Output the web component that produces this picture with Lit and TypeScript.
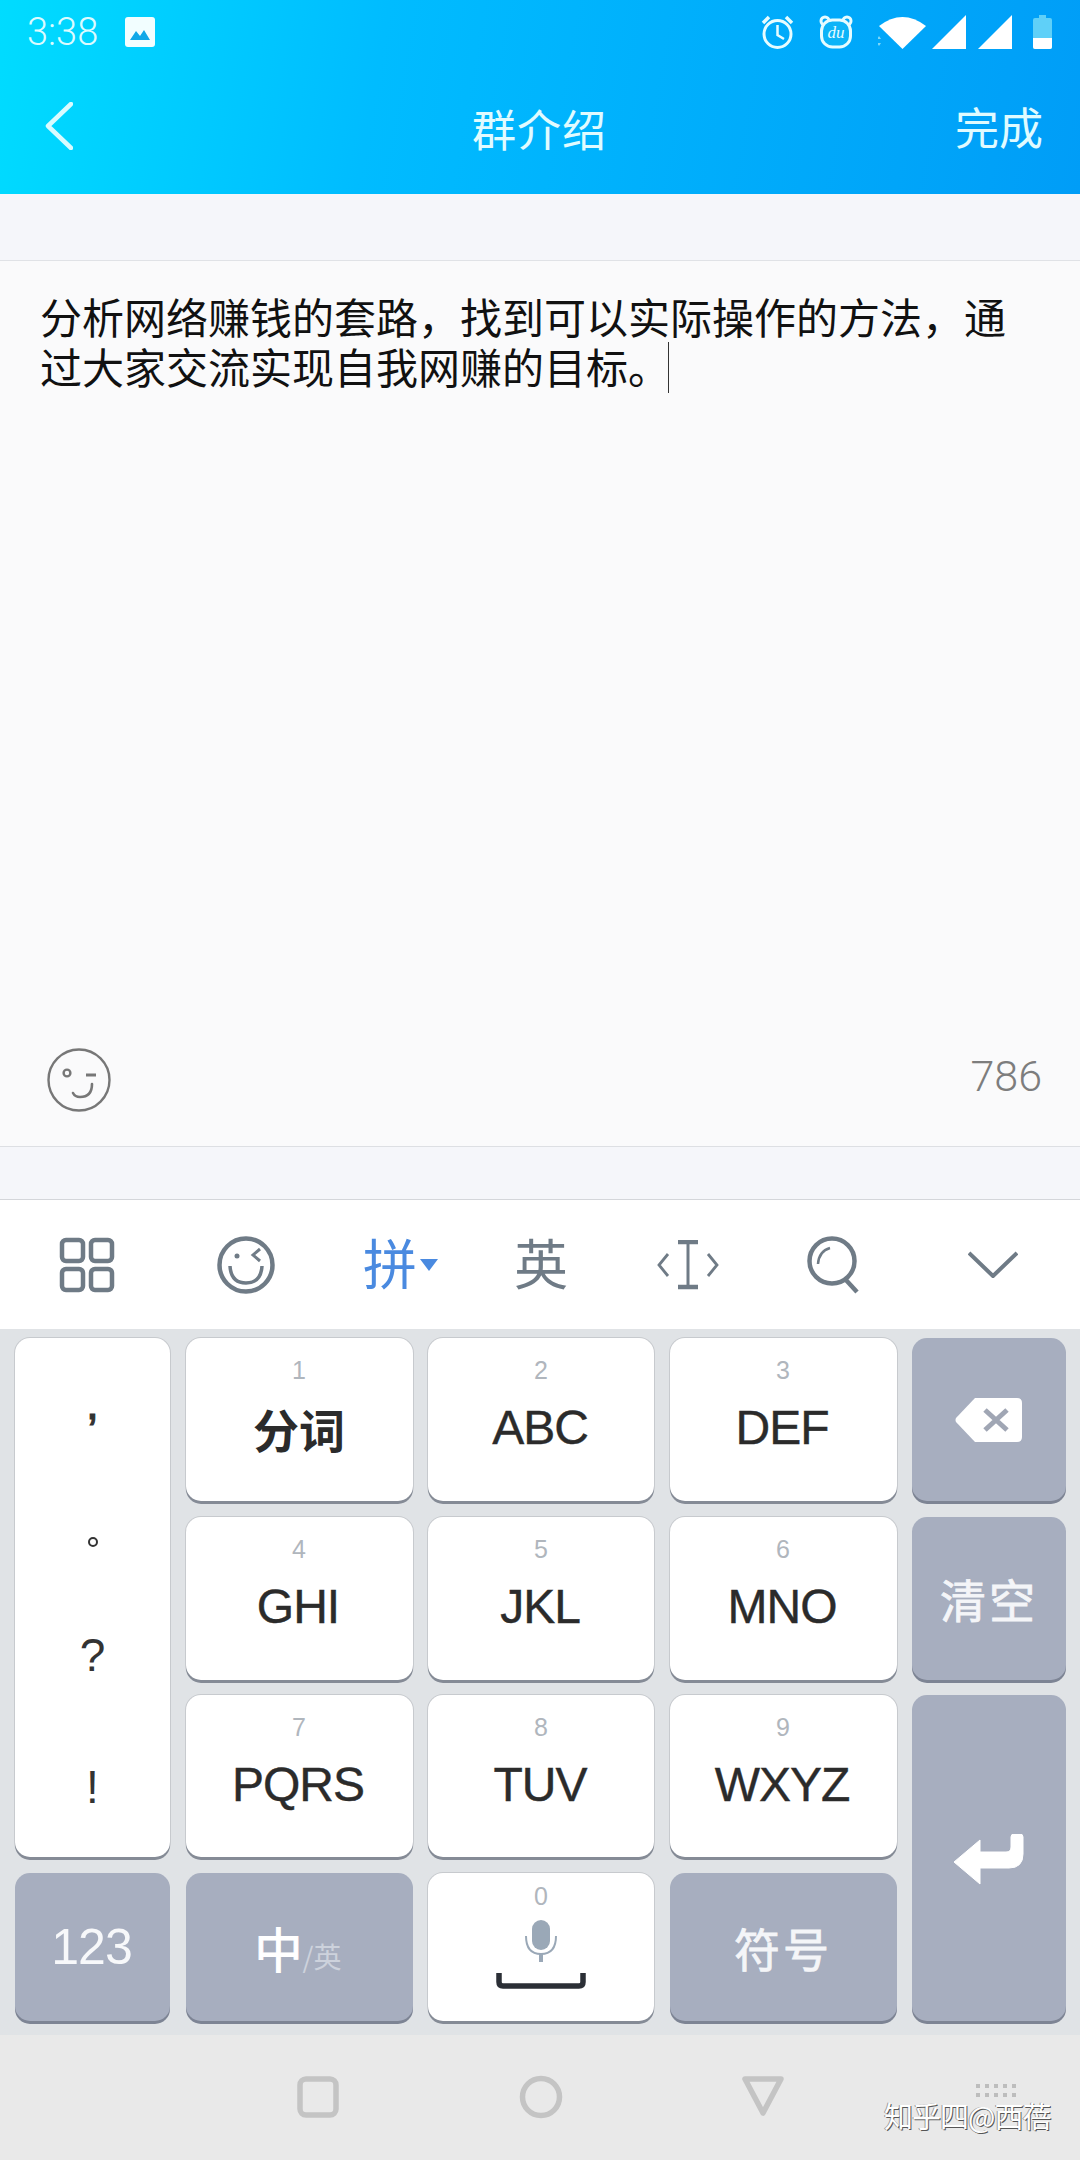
import { LitElement, html, css } from "lit";
import { customElement } from "lit/decorators.js";

@customElement("app-root")
export class AppRoot extends LitElement {
  static styles = css`
    :host { display: block; width: 1080px; height: 2160px; font-family: "Noto Sans CJK SC", "Noto Sans", sans-serif; background: #fafafb; position: relative; overflow: hidden; }
    .page { display: flex; flex-direction: column; height: 2160px; }
    .top { height: 194px; background: linear-gradient(100deg, #00dcff 0%, #00bcff 35%, #009df7 100%); color: #dcfbff; display: flex; flex-direction: column; }
    .status { height: 64px; display: flex; align-items: center; padding: 0 28px 0 27px; flex: none; }
    .time { font: 300 38px Roboto, sans-serif; width: 98px; }
    .status .spacer { flex: 1; }
    .status svg { display: block; flex: none; }
    .st-alarm { margin-right: 25px; margin-left: 2px; }
    .st-du { margin-right: 25px; }
    .st-wifi { margin-right: 5px; }
    .st-sig1 { margin-right: 12px; }
    .st-sig2 { margin-right: 21px; }
    .nav { flex: 1; display: grid; grid-template-columns: 1fr auto 1fr; align-items: center; padding: 0 37px 6px 45px; }
    .nav svg { display: block; }
    .title { font-size: 44px; line-height: 60px; letter-spacing: 1px; color: #e0fbff; margin-top: 3px; margin-left: -9px; }
    .done { font-size: 44px; line-height: 60px; justify-self: end; color: #e0fbff; }
    .gap1 { height: 66px; background: #f5f6fa; flex: none; }
    .editor { height: 887px; flex: none; box-sizing: border-box; border-top: 1px solid #e0e2e6; border-bottom: 1px solid #dddfe3; background: #fafafb; display: flex; flex-direction: column; }
    .text { padding: 30px 74px 0 40px; font-size: 42px; line-height: 50px; color: #111; }
    .caret { display: inline-block; width: 1px; height: 51px; background: #333; margin: -5px 0 -5px -2px; vertical-align: -4px; }
    .foot { margin-top: auto; padding: 0 38px 34px 47px; display: flex; align-items: center; justify-content: space-between; }
    .count { font: 300 43px Roboto, sans-serif; color: #7d7d7d; margin-top: -8px; }
    .gap2 { height: 52px; background: #f5f6fa; flex: none; }
    .tools { height: 130px; box-sizing: border-box; flex: none; background: #fff; border-top: 1px solid #d4d6da; display: grid; grid-template-columns: 174px 144px 150px 146px 148px 144px 174px; align-items: center; justify-items: center; color: #6f7b86; }
    .tools svg { display: block; }
    .tool-txt { font-size: 54px; line-height: 60px; margin-top: -5px; }
    .pin { color: #4a8ae0; display: flex; align-items: center; margin-left: 15px; }
    .pin svg { margin-left: 3px; margin-top: 0; }
    .kb { height: 706px; flex: none; box-sizing: border-box; background: #e0e3e6; padding: 9px 14px 14.5px 15px; display: grid; grid-template-columns: 155px 227px 226px 227px 154px; grid-template-rows: 163px 163px 162px 148px; column-gap: 15.5px; row-gap: 15.5px; }
    .key { position: relative; border-radius: 15px; background: #fff; box-shadow: 0 3px 0 #858b96, 0 0 0 1px #c7cace; display: flex; flex-direction: column; align-items: center; color: #2b2b2b; }
    .key .num { font: 25px "Liberation Sans", sans-serif; color: #b0b6bd; line-height: 30px; margin-top: 17px; }
    .key .lab { font: 48px "Liberation Sans", "Noto Sans CJK SC", sans-serif; line-height: 60px; margin-top: 13px; letter-spacing: -1px; margin-left: -2px; -webkit-text-stroke: 0.4px #2b2b2b; }
    .key .zh { font: 700 46px "Noto Sans CJK SC", sans-serif; line-height: 60px; margin-top: 13px; }
    .dark { background: #a7aebf; box-shadow: 0 3px 0 #7d8494; color: #fff; justify-content: center; }
    .dark .big { font: 46px "Noto Sans CJK SC", sans-serif; line-height: 60px; letter-spacing: 3px; color: #f4f5f8; -webkit-text-stroke: 0.8px #f4f5f8; }
    .n123 { font: 50px "Liberation Sans", sans-serif; color: #f7f8fa; letter-spacing: -1px; margin-left: -2px; }
    .zhong { display: flex; align-items: baseline; }
    .zhong b { font: 48px "Noto Sans CJK SC", sans-serif; color: #fff; -webkit-text-stroke: 1px #fff; margin-left: -2px; }
    .zhong i { font: 28px "Noto Sans CJK SC", sans-serif; color: #cdd2dc; }
    .punct { grid-row: 1 / 4; justify-content: flex-start; color: #333; }
    .p { flex: none; display: flex; align-items: center; justify-content: center; font: 46px "Liberation Sans", sans-serif; line-height: 60px; }
    .p1 { margin-top: 5px; height: 120px; -webkit-text-stroke: 1.2px #333; }
    .p2 { height: 158px; }
    .ring { width: 10px; height: 10px; border: 2px solid #333; border-radius: 50%; box-sizing: border-box; }
    .p3 { height: 68px; }
    .p4 { height: 172px; padding-top: 24px; box-sizing: border-box; }
    .del { grid-column: 5; grid-row: 1; }
    .clear { grid-column: 5; grid-row: 2; }
    .enter { grid-column: 5; grid-row: 3 / 5; }
    .enter svg { margin-top: 4px; }
    .voice .num { margin-top: 8px; }
    .voice svg { display: block; margin-top: 9px; }
    .navbar { flex: 1; background: #e9e9e9; display: grid; grid-template-columns: 297px 42px 181px 42px 180px 42px 1fr; padding-top: 41px; box-sizing: border-box; align-items: start; }
    .navbar svg { display: block; overflow: visible; }
    .mark { position: absolute; left: 884px; top: 2098px; font-size: 29px; line-height: 34px; letter-spacing: -1px; color: #fff; text-shadow: 1px 1px 0 #555, -1px 0 0 #999; white-space: nowrap; }
    .dots { position: absolute; left: 976px; top: 2084px; }
  `;

  private digitKey(num: string, label: string, zh = false) {
    return html`<div class="key"><span class="num">${num}</span><span class=${zh ? "zh" : "lab"}>${label}</span></div>`;
  }

  render() {
    return html`
      <div class="page">
        <div class="top">
          <div class="status">
            <span class="time">3:38</span>
            <svg width="30" height="30" viewBox="0 0 30 30"><rect x="0" y="0" width="30" height="30" rx="3" fill="#f2feff"/><path d="M5 23 L11 14 L15 19 L19 13 L25 23 Z" fill="#11a8e8"/></svg>
            <span class="spacer"></span>
            <svg class="st-alarm" width="33" height="35" viewBox="0 0 33 35" fill="none" stroke="#e6fcff" stroke-width="3"><circle cx="16.5" cy="19" r="13.5"/><path d="M16.5 10 V20 L23 24" stroke-width="2.5"/><path d="M2 8 L8 2 M31 8 L25 2" stroke-width="3.5"/></svg>
            <svg class="st-du" width="34" height="34" viewBox="0 0 34 34" fill="none" stroke="#e6fcff" stroke-width="3"><circle cx="6" cy="6" r="4"/><circle cx="28" cy="6" r="4"/><rect x="2.5" y="5" width="29" height="27" rx="11" fill="#0cb4f8"/><text x="17" y="23" font-family="Liberation Serif, serif" font-style="italic" font-size="17" fill="#e6fcff" stroke="none" text-anchor="middle">du</text></svg>
            <svg class="st-wifi" width="49" height="34" viewBox="0 0 49 34"><path d="M24.5 33 L1 10 Q24.5 -8 48 10 Z" fill="#fff" transform="translate(0 1)"/><path d="M2 24 L4 21 L6 24 Z M2 28 L4 31 L6 28 Z" fill="#7fd8f8" transform="translate(-3 0)"/></svg>
            <svg class="st-sig1" width="34" height="34" viewBox="0 0 34 34"><path d="M34 0 V34 H0 Z" fill="#fff"/></svg>
            <svg class="st-sig2" width="34" height="34" viewBox="0 0 34 34"><path d="M34 0 V34 H0 Z" fill="#fff"/></svg>
            <svg width="19" height="34" viewBox="0 0 19 34"><path d="M6 0 H13 V3 H17 Q19 3 19 5 V32 Q19 34 17 34 H2 Q0 34 0 32 V5 Q0 3 2 3 H6 Z" fill="#5fd0f8"/><path d="M0 23 H19 V32 Q19 34 17 34 H2 Q0 34 0 32 Z" fill="#fff"/></svg>
          </div>
          <div class="nav">
            <svg width="28" height="48" viewBox="0 0 28 48" fill="none" stroke="#d9fbff" stroke-width="4.5" stroke-linecap="round" stroke-linejoin="round"><path d="M26 2 L3 24 L26 46"/></svg>
            <span class="title">群介绍</span>
            <span class="done">完成</span>
          </div>
        </div>
        <div class="gap1"></div>
        <div class="editor">
          <div class="text">分析网络赚钱的套路，找到可以实际操作的方法，通过大家交流实现自我网赚的目标。<span class="caret"></span></div>
          <div class="foot">
            <svg width="64" height="64" viewBox="0 0 64 64" fill="none" stroke="#777" stroke-width="2.4"><circle cx="32" cy="32" r="30.5"/><circle cx="20" cy="25" r="3.4"/><path d="M39 27 H49" stroke-width="3"/><path d="M45 36 Q45 49 33 49 Q28 49 26 45" stroke-linecap="round" stroke-width="2.6"/></svg>
            <span class="count">786</span>
          </div>
        </div>
        <div class="gap2"></div>
        <div class="tools">
          <svg width="56" height="56" viewBox="0 0 56 56" fill="none" stroke="#6f7b86" stroke-width="4.5"><rect x="3" y="3" width="21" height="21" rx="4"/><rect x="32" y="3" width="21" height="21" rx="4"/><rect x="3" y="32" width="21" height="21" rx="4"/><rect x="32" y="32" width="21" height="21" rx="4"/></svg>
          <svg width="58" height="58" viewBox="0 0 58 58" fill="none" stroke="#6f7b86" stroke-width="4.5"><circle cx="29" cy="29" r="26.5"/><path d="M13 30 Q14 47 29 47 Q44 47 45 30" stroke-width="3.5"/><circle cx="20" cy="20" r="2.5" fill="#6f7b86" stroke="none"/><path d="M43 13 L36 19 L43 25" stroke-width="3"/></svg>
          <div class="pin"><span class="tool-txt">拼</span><svg width="18" height="12" viewBox="0 0 18 12"><path d="M0 0 H18 L9 12 Z" fill="#4a8ae0"/></svg></div>
          <span class="tool-txt">英</span>
          <svg width="62" height="50" viewBox="0 0 62 50" fill="none" stroke="#6f7b86"><path d="M21 2 H41 M21 47 H41" stroke-width="4.5"/><path d="M31 2 V47" stroke-width="3"/><path d="M11 14 L2 25 L11 36 M51 14 L60 25 L51 36" stroke-width="2.8"/></svg>
          <svg width="54" height="58" viewBox="0 0 54 58" fill="none" stroke="#6f7b86"><circle cx="25" cy="25" r="22.5" stroke-width="4.5"/><path d="M23 12 Q12 15 11 28" stroke-width="2.5"/><path d="M39 44 L50 56" stroke-width="4.5"/></svg>
          <svg width="50" height="28" viewBox="0 0 50 28" fill="none" stroke="#6f7b86" stroke-width="4" stroke-linejoin="round"><path d="M1 2 L25 25 L49 2"/></svg>
        </div>
        <div class="kb">
          <div class="key punct">
            <div class="p p1">,</div>
            <div class="p p2"><span class="ring"></span></div>
            <div class="p p3">?</div>
            <div class="p p4">!</div>
          </div>
          ${this.digitKey("1", "分词", true)}
          ${this.digitKey("2", "ABC")}
          ${this.digitKey("3", "DEF")}
          <div class="key dark del">
            <svg width="68" height="46" viewBox="0 0 68 46"><path d="M20 1 H62 Q67 1 67 6 V40 Q67 45 62 45 H20 L1 25 Q0 23 1 21 Z" fill="#fff"/><path d="M30 13 L52 33 M52 13 L30 33" stroke="#a0a6b4" stroke-width="5"/></svg>
          </div>
          ${this.digitKey("4", "GHI")}
          ${this.digitKey("5", "JKL")}
          ${this.digitKey("6", "MNO")}
          <div class="key dark clear"><span class="big">清空</span></div>
          ${this.digitKey("7", "PQRS")}
          ${this.digitKey("8", "TUV")}
          ${this.digitKey("9", "WXYZ")}
          <div class="key dark enter">
            <svg width="70" height="52" viewBox="0 0 70 52"><path d="M0 28 L26 6 V18 H52 Q57 18 57 13 V3 Q57 0 60 0 H66 Q69 0 69 3 V20 Q69 34 55 34 H26 V50 Z" fill="#fff" stroke="#fff" stroke-width="1" stroke-linejoin="round"/></svg>
          </div>
          <div class="key dark"><span class="n123">123</span></div>
          <div class="key dark"><div class="zhong"><b>中</b><i>/英</i></div></div>
          <div class="key voice">
            <span class="num">0</span>
            <svg width="94" height="70" viewBox="0 0 94 70" fill="none"><rect x="38" y="0" width="18" height="30" rx="9" fill="#9aa8b7"/><path d="M32 16 Q32 34 47 34 Q62 34 62 16" stroke="#9aa8b7" stroke-width="2"/><path d="M47 34 V42" stroke="#9aa8b7" stroke-width="4"/><path d="M5 53 V62 Q5 66 9 66 H85 Q89 66 89 62 V53" stroke="#2b2f36" stroke-width="5.5"/></svg>
          </div>
          <div class="key dark"><span class="big">符号</span></div>
        </div>
        <div class="navbar">
          <span></span>
          <svg width="42" height="42" viewBox="0 0 42 42" fill="none" stroke="#c4c4c4" stroke-width="5.5"><rect x="3" y="3" width="36" height="36" rx="6"/></svg>
          <span></span>
          <svg width="42" height="42" viewBox="0 0 42 42" fill="none" stroke="#c4c4c4" stroke-width="5.5"><circle cx="21" cy="21" r="18.5"/></svg>
          <span></span>
          <svg width="42" height="40" viewBox="0 0 42 40" fill="none" stroke="#c4c4c4" stroke-width="5.5" stroke-linejoin="round"><path d="M3 3 H39 L21 37 Z"/></svg>
        </div>
      </div>
      <svg class="dots" width="46" height="18" viewBox="0 0 46 18" fill="#bdbdbd"><path d="M0 0h4v4h-4z M9 0h4v4h-4z M18 0h4v4h-4z M27 0h4v4h-4z M36 0h4v4h-4z M0 9h4v4h-4z M9 9h4v4h-4z M18 9h4v4h-4z M27 9h4v4h-4z M36 9h4v4h-4z"/></svg>
      <div class="mark">知乎四@西蓓</div>
    `;
  }
}
